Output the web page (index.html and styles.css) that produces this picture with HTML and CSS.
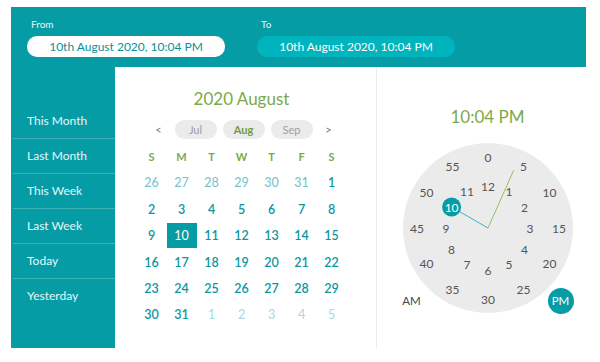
FILE: index.html
```html
<!DOCTYPE html>
<html lang="en">
<head>
    <meta charset="UTF-8">
    <title>Date Range Picker</title>
    <link rel="stylesheet" href="styles.css">
</head>
<body>
    <div class="picker">
        <!-- From / To fields -->
        <div class="range-bar">
            <div class="range-field">
                <span class="range-label">From</span>
                <div class="range-input active">10th August 2020, 10:04 PM</div>
            </div>
            <div class="range-field">
                <span class="range-label">To</span>
                <div class="range-input">10th August 2020, 10:04 PM</div>
            </div>
        </div>

        <div class="picker-body">
            <!-- Presets -->
            <ul class="presets">
                <li>This Month</li>
                <li>Last Month</li>
                <li>This Week</li>
                <li>Last Week</li>
                <li>Today</li>
                <li>Yesterday</li>
            </ul>

            <!-- Calendar -->
            <div class="calendar">
                <div class="cal-title">2020 August</div>
                <div class="cal-nav">
                    <span class="cal-arrow">&lt;</span>
                    <span class="cal-month">Jul</span>
                    <span class="cal-month current">Aug</span>
                    <span class="cal-month">Sep</span>
                    <span class="cal-arrow">&gt;</span>
                </div>
                <div class="cal-grid">
                    <span class="weekday">S</span><span class="weekday">M</span><span class="weekday">T</span><span class="weekday">W</span><span class="weekday">T</span><span class="weekday">F</span><span class="weekday">S</span>
                    <span class="day prev">26</span><span class="day prev">27</span><span class="day prev">28</span><span class="day prev">29</span><span class="day prev">30</span><span class="day prev">31</span><span class="day">1</span>
                    <span class="day">2</span><span class="day">3</span><span class="day">4</span><span class="day">5</span><span class="day">6</span><span class="day">7</span><span class="day">8</span>
                    <span class="day">9</span><span class="day selected">10</span><span class="day">11</span><span class="day">12</span><span class="day">13</span><span class="day">14</span><span class="day">15</span>
                    <span class="day">16</span><span class="day">17</span><span class="day">18</span><span class="day">19</span><span class="day">20</span><span class="day">21</span><span class="day">22</span>
                    <span class="day">23</span><span class="day">24</span><span class="day">25</span><span class="day">26</span><span class="day">27</span><span class="day">28</span><span class="day">29</span>
                    <span class="day">30</span><span class="day">31</span><span class="day next">1</span><span class="day next">2</span><span class="day next">3</span><span class="day next">4</span><span class="day next">5</span>
                </div>
            </div>

            <!-- Time -->
            <div class="time">
                <div class="time-title">10:04 PM</div>
                <div class="clock">
                    <svg class="clock-face" width="170" height="170" viewBox="0 0 170 170">
                        <circle cx="85" cy="85" r="85" fill="#ebebeb"/>
                        <line x1="85" y1="85" x2="110.6" y2="27.4" stroke="#93bf62" stroke-width="1"/>
                        <line x1="85" y1="85" x2="48.6" y2="64" stroke="#3fb4be" stroke-width="1"/>
                        <g class="minutes">
                            <text x="85" y="14">0</text>
                            <text x="120.5" y="23.5">5</text>
                            <text x="146.5" y="49.5">10</text>
                            <text x="156" y="85">15</text>
                            <text x="146.5" y="120.5">20</text>
                            <text x="120.5" y="146.5">25</text>
                            <text x="85" y="156">30</text>
                            <text x="49.5" y="146.5">35</text>
                            <text x="23.5" y="120.5">40</text>
                            <text x="14" y="85">45</text>
                            <text x="23.5" y="49.5">50</text>
                            <text x="49.5" y="23.5">55</text>
                        </g>
                        <g class="hours">
                            <text x="85" y="43">12</text>
                            <text x="106" y="48.6">1</text>
                            <text x="121.4" y="64">2</text>
                            <text x="127" y="85">3</text>
                            <text x="121.4" y="106">4</text>
                            <text x="106" y="121.4">5</text>
                            <text x="85" y="127">6</text>
                            <text x="64" y="121.4">7</text>
                            <text x="48.6" y="106">8</text>
                            <text x="43" y="85">9</text>
                            <text x="64" y="48.6">11</text>
                        </g>
                        <circle cx="48.6" cy="64" r="9.5" fill="#069ca5"/>
                        <text class="hour-selected" x="48.6" y="64">10</text>
                    </svg>
                    <span class="meridiem am">AM</span>
                    <span class="meridiem pm active">PM</span>
                </div>
            </div>
        </div>
    </div>
</body>
</html>
```

FILE: styles.css
```css
body {
    margin: 0;
    padding: 0;
    background: #ffffff;
    font-family: "Lato", "Open Sans", sans-serif;
}

.picker {
    width: 575px;
    margin: 7px 0 0 11px;
}

/* From / To bar */
.range-bar {
    height: 60px;
    box-sizing: border-box;
    padding: 11px 0 0 16px;
    display: flex;
    gap: 32px;
    background: #069ca5;
}

.range-field {
    display: flex;
    flex-direction: column;
    gap: 6px;
}

.range-label {
    padding-left: 4px;
    font-size: 10px;
    line-height: 12px;
    color: #e4f6f7;
}

.range-input {
    width: 198px;
    height: 21px;
    line-height: 21px;
    border-radius: 10px;
    text-align: center;
    font-size: 12px;
    color: #ffffff;
    background: #00b4be;
}

.range-input.active {
    background: #ffffff;
    color: #0a8f99;
}

/* Body */
.picker-body {
    display: flex;
    height: 281px;
}

.presets {
    width: 104px;
    margin: 0;
    padding: 37px 0 0 2px;
    box-sizing: border-box;
    list-style: none;
    background: #069ca5;
}

.presets li {
    height: 34px;
    line-height: 34px;
    padding-left: 14px;
    font-size: 12px;
    color: #e6f6f7;
    border-bottom: 1px solid rgba(255, 255, 255, 0.22);
}

.presets li:last-child {
    border-bottom: none;
}

/* Calendar */
.calendar {
    width: 262px;
    box-sizing: border-box;
    padding: 22px 8px 0 0;
    border-right: 1px solid #ececec;
    background: #ffffff;
}

.cal-title {
    font-size: 17px;
    line-height: 20px;
    text-align: center;
    color: #7aaa48;
}

.cal-nav {
    margin: 11px 0 0 4px;
    display: flex;
    justify-content: center;
    gap: 6px;
    height: 19px;
}

.cal-arrow {
    width: 20px;
    line-height: 19px;
    text-align: center;
    font-size: 11px;
    color: #777;
}

.cal-month {
    width: 42px;
    line-height: 19px;
    border-radius: 10px;
    text-align: center;
    font-size: 11px;
    color: #a0a0a0;
    background: #ebebeb;
}

.cal-month.current {
    color: #6f9e40;
    font-weight: bold;
}

.cal-grid {
    margin: 5px auto 0;
    width: 210px;
    display: grid;
    grid-template-columns: repeat(7, 30px);
    grid-auto-rows: 25px;
    row-gap: 1.4px;
}

.weekday,
.day {
    display: flex;
    align-items: center;
    justify-content: center;
}

.weekday {
    font-size: 11px;
    font-weight: bold;
    color: #7aaa48;
}

.day {
    font-size: 12.5px;
    font-weight: 600;
    color: #0b97a1;
}

.day.prev {
    font-weight: normal;
    color: #6ec4cd;
}

.day.next {
    font-weight: normal;
    color: #a6d9de;
}

.day.selected {
    background: #069ca5;
    color: #ffffff;
    font-weight: normal;
}

/* Time */
.time {
    flex: 1;
    padding: 40px 0 0 12px;
    display: flex;
    flex-direction: column;
    align-items: center;
    background: #ffffff;
}

.time-title {
    font-size: 17px;
    line-height: 20px;
    color: #7aaa48;
}

.clock {
    position: relative;
    width: 170px;
    height: 170px;
    margin-top: 16px;
}

.clock-face {
    display: block;
}

.clock-face text {
    font-family: "Lato", "Open Sans", sans-serif;
    font-size: 12px;
    fill: #555555;
    text-anchor: middle;
    dominant-baseline: central;
}

.clock-face .hour-selected {
    fill: #ffffff;
}

.meridiem {
    position: absolute;
    top: 145px;
    width: 26px;
    height: 26px;
    line-height: 26px;
    text-align: center;
    font-size: 11.5px;
    color: #444;
}

.meridiem.am {
    left: -4px;
}

.meridiem.pm {
    left: 145px;
}

.meridiem.active {
    border-radius: 50%;
    background: #069ca5;
    color: #ffffff;
}
```
